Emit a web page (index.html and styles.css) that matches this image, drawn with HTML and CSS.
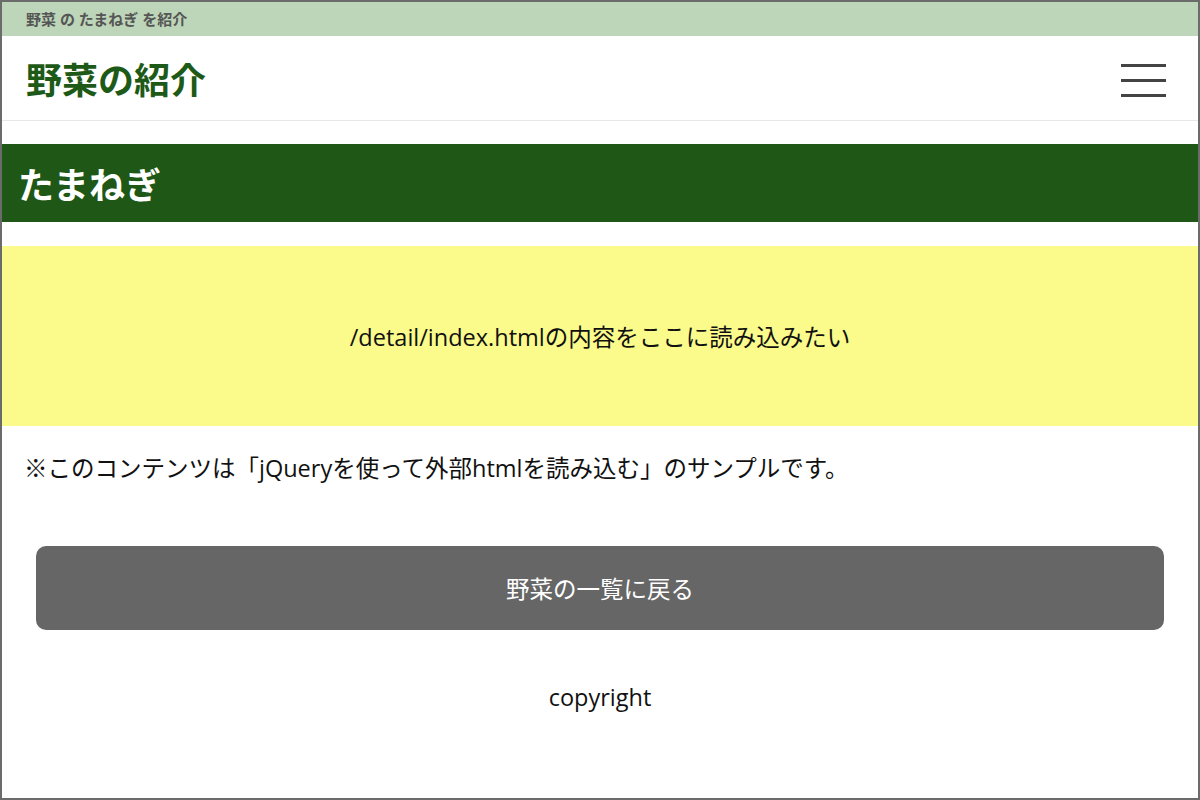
FILE: index.html
```html
<!DOCTYPE html>
<html lang="ja">
<head>
	<meta charset="UTF-8">
	<title>野菜の紹介</title>
	<link rel="stylesheet" href="styles.css">
</head>
<body>
	<div class="page">
		<div class="topbar">野菜 の たまねぎ を紹介</div>
		<header class="header">
			<h1 class="logo">野菜の紹介</h1>
			<div class="menu">
				<span></span>
				<span></span>
				<span></span>
			</div>
		</header>

		<h2 class="pageTitle">たまねぎ</h2>

		<div class="detail">
			<p>/detail/index.htmlの内容をここに読み込みたい</p>
		</div>

		<p class="note">※このコンテンツは「jQueryを使って外部htmlを読み込む」のサンプルです。</p>

		<a class="backBtn" href="#">野菜の一覧に戻る</a>

		<footer class="footer">copyright</footer>
	</div>
</body>
</html>
```

FILE: styles.css
```css
*{
	box-sizing: border-box;
}
body{
	margin:0;
	font-family: "Open Sans", "Noto Sans CJK JP", sans-serif;
	color:#111;
}
.page{
	height:800px;
	border:2px solid #6b6b6b;
	overflow:hidden;
}
.topbar{
	height:34px;
	line-height:34px;
	padding-left:24px;
	background-color:#bdd5b8;
	color:#555;
	font-size:15px;
	font-weight:bold;
}
.header{
	height:85px;
	display:flex;
	align-items:center;
	justify-content:space-between;
	padding:0 32px 0 24px;
	border-bottom:1px solid #e8e8e8;
}
.logo{
	margin:0;
	font-size:36px;
	font-weight:bold;
	color:#1e5a17;
}
.menu{
	width:45px;
	margin-top:4px;
	display:flex;
	flex-direction:column;
	gap:12px;
}
.menu span{
	height:3px;
	background-color:#444;
}
.pageTitle{
	margin:23px 0 0;
	height:78px;
	display:flex;
	align-items:center;
	padding-left:16px;
	background-color:#1f5716;
	color:#fff;
	font-size:36px;
	font-weight:bold;
}
.detail{
	margin-top:24px;
	height:180px;
	display:flex;
	align-items:center;
	justify-content:center;
	background-color:#fbfb8b;
}
.detail p{
	margin:0;
	font-size:23.5px;
}
.note{
	margin:25px 0 0;
	padding-left:22px;
	font-size:23.5px;
	line-height:34px;
}
.backBtn{
	display:flex;
	align-items:center;
	justify-content:center;
	height:84px;
	margin:61px 34px 0;
	border-radius:10px;
	background-color:#666;
	color:#fff;
	font-size:23.5px;
	text-decoration:none;
}
.footer{
	margin-top:50px;
	text-align:center;
	font-size:23.5px;
	line-height:34px;
}
```
